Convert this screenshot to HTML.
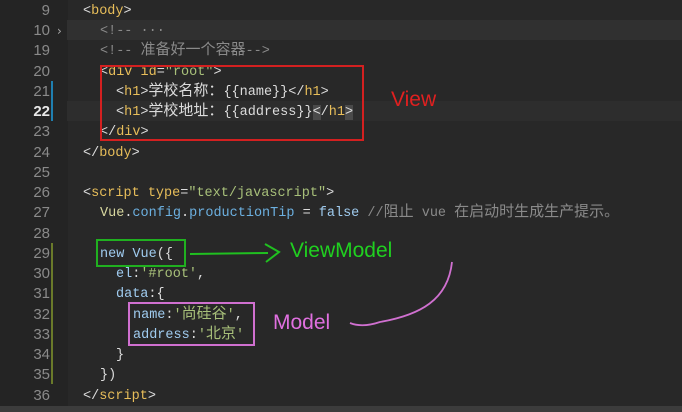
<!DOCTYPE html>
<html><head><meta charset="utf-8"><style>
body{margin:0;width:682px;height:412px;background:#282828;overflow:hidden;position:relative;font-family:"Liberation Mono","Noto Sans CJK SC",monospace;font-size:13.5px}
.g{position:absolute;left:0;top:0;width:68px;height:406px;background:#242424}
.ln{position:absolute;left:0;width:50px;height:20px;line-height:20px;text-align:right;color:#8a8a8a;font-family:"Liberation Sans",sans-serif;font-size:15px;margin-top:1px}
.ln.a{color:#e8e8e8;font-weight:bold}
.c{position:absolute;white-space:pre;color:#dcdcdc;height:20px;line-height:20px;margin-top:2px}
.t{color:#e8be5a}.s{color:#a8c07a}.cm{color:#8a8a8a}.b{color:#6cb0e0}.k{color:#a0ccf0}
.cjk{font-family:"Noto Sans CJK SC",sans-serif;line-height:0;font-size:15px}
.bot{position:absolute;left:0;top:406px;width:682px;height:6px;background:#3c3c3c}
.lbl{position:absolute;font-family:"Liberation Sans",sans-serif;font-size:21px}
</style></head><body>
<div class="g"></div>
<div style="position:absolute;left:67px;top:20px;width:615px;height:20px;background:#303030"></div>
<div style="position:absolute;left:67px;top:101px;width:615px;height:20px;background:#2d2d2d"></div>
<div style="position:absolute;left:51px;top:81px;width:2px;height:40px;background:#1f7fb0"></div>
<div style="position:absolute;left:51px;top:243px;width:2px;height:141px;background:#6a7a2a"></div>
<div style="position:absolute;left:57px;top:21px;color:#aaa;font-size:12px;line-height:20px;font-family:'DejaVu Sans'">›</div>
<div class="ln" style="top:0px">9</div>
<div class="ln" style="top:20px">10</div>
<div class="ln" style="top:40px">19</div>
<div class="ln" style="top:61px">20</div>
<div class="ln" style="top:81px">21</div>
<div class="ln a" style="top:101px">22</div>
<div class="ln" style="top:121px">23</div>
<div class="ln" style="top:142px">24</div>
<div class="ln" style="top:162px">25</div>
<div class="ln" style="top:182px">26</div>
<div class="ln" style="top:202px">27</div>
<div class="ln" style="top:223px">28</div>
<div class="ln" style="top:243px">29</div>
<div class="ln" style="top:263px">30</div>
<div class="ln" style="top:283px">31</div>
<div class="ln" style="top:304px">32</div>
<div class="ln" style="top:324px">33</div>
<div class="ln" style="top:344px">34</div>
<div class="ln" style="top:364px">35</div>
<div class="ln" style="top:385px">36</div>

<div class="c" style="left:83px;top:0px">&lt;<span class="t">body</span>&gt;</div>
<div class="c cm" style="left:100px;top:20px">&lt;!-- ···</div>
<div class="c cm" style="left:100px;top:40px">&lt;!-- <span class="cjk">准备好一个容器</span>--&gt;</div>
<div class="c" style="left:100px;top:61px">&lt;<span class="t">div</span> <span class="t">id</span>=<span class="s">"root"</span>&gt;</div>
<div class="c" style="left:116px;top:81px">&lt;<span class="t">h1</span>&gt;<span class="cjk">学校名称：</span>{{name}}&lt;/<span class="t">h1</span>&gt;</div>
<div class="c" style="left:116px;top:101px">&lt;<span class="t">h1</span>&gt;<span class="cjk">学校地址：</span>{{address}}<span style="background:#4a4a4a">&lt;</span>/<span class="t">h1</span><span style="background:#4a4a4a">&gt;</span></div>
<div class="c" style="left:100px;top:121px">&lt;/<span class="t">div</span>&gt;</div>
<div class="c" style="left:83px;top:142px">&lt;/<span class="t">body</span>&gt;</div>
<div class="c" style="left:83px;top:182px">&lt;<span class="t">script</span> <span class="t">type</span>=<span class="s">"text/javascript"</span>&gt;</div>
<div class="c" style="left:100px;top:202px"><span style="color:#d8d8a0">Vue</span>.<span class="b">config</span>.<span class="b">productionTip</span> = <span class="k">false</span> <span class="cm">//<span class="cjk">阻止</span> vue <span class="cjk">在启动时生成生产提示。</span></span></div>
<div class="c" style="left:100px;top:243px"><span class="k">new</span> <span class="k">Vue</span>({</div>
<div class="c" style="left:116px;top:263px"><span class="k">el</span>:<span class="s">'#root'</span>,</div>
<div class="c" style="left:116px;top:283px"><span class="k">data</span>:{</div>
<div class="c" style="left:133px;top:304px"><span class="k">name</span>:<span class="s">'<span class="cjk">尚硅谷</span>'</span>,</div>
<div class="c" style="left:133px;top:324px"><span class="k">address</span>:<span class="s">'<span class="cjk">北京</span>'</span></div>
<div class="c" style="left:116px;top:344px">}</div>
<div class="c" style="left:100px;top:364px">})</div>
<div class="c" style="left:83px;top:385px">&lt;/<span class="t">script</span>&gt;</div>

<div style="position:absolute;left:100px;top:65px;width:260px;height:72px;border:2px solid #d42020"></div>
<div style="position:absolute;left:96px;top:239px;width:86px;height:24px;border:2px solid #20b020"></div>
<div style="position:absolute;left:128px;top:302px;width:123px;height:40px;border:2px solid #d070d0"></div>
<div class="lbl" style="left:391px;top:88px;color:#e02020">View</div>
<div class="lbl" style="left:290px;top:239px;color:#20d020">ViewModel</div>
<div class="lbl" style="left:273px;top:311px;color:#e070e0">Model</div>
<svg style="position:absolute;left:0;top:0" width="682" height="412">
<path d="M190 254 L268 253 M265 244 L279 252 L266 262" stroke="#20c020" stroke-width="2" fill="none"/>
<path d="M452 262 C448 300 420 315 380 322 C365 327 355 325 350 323" stroke="#d070d0" stroke-width="1.8" fill="none"/>
</svg>
<div class="bot"></div>
</body></html>
